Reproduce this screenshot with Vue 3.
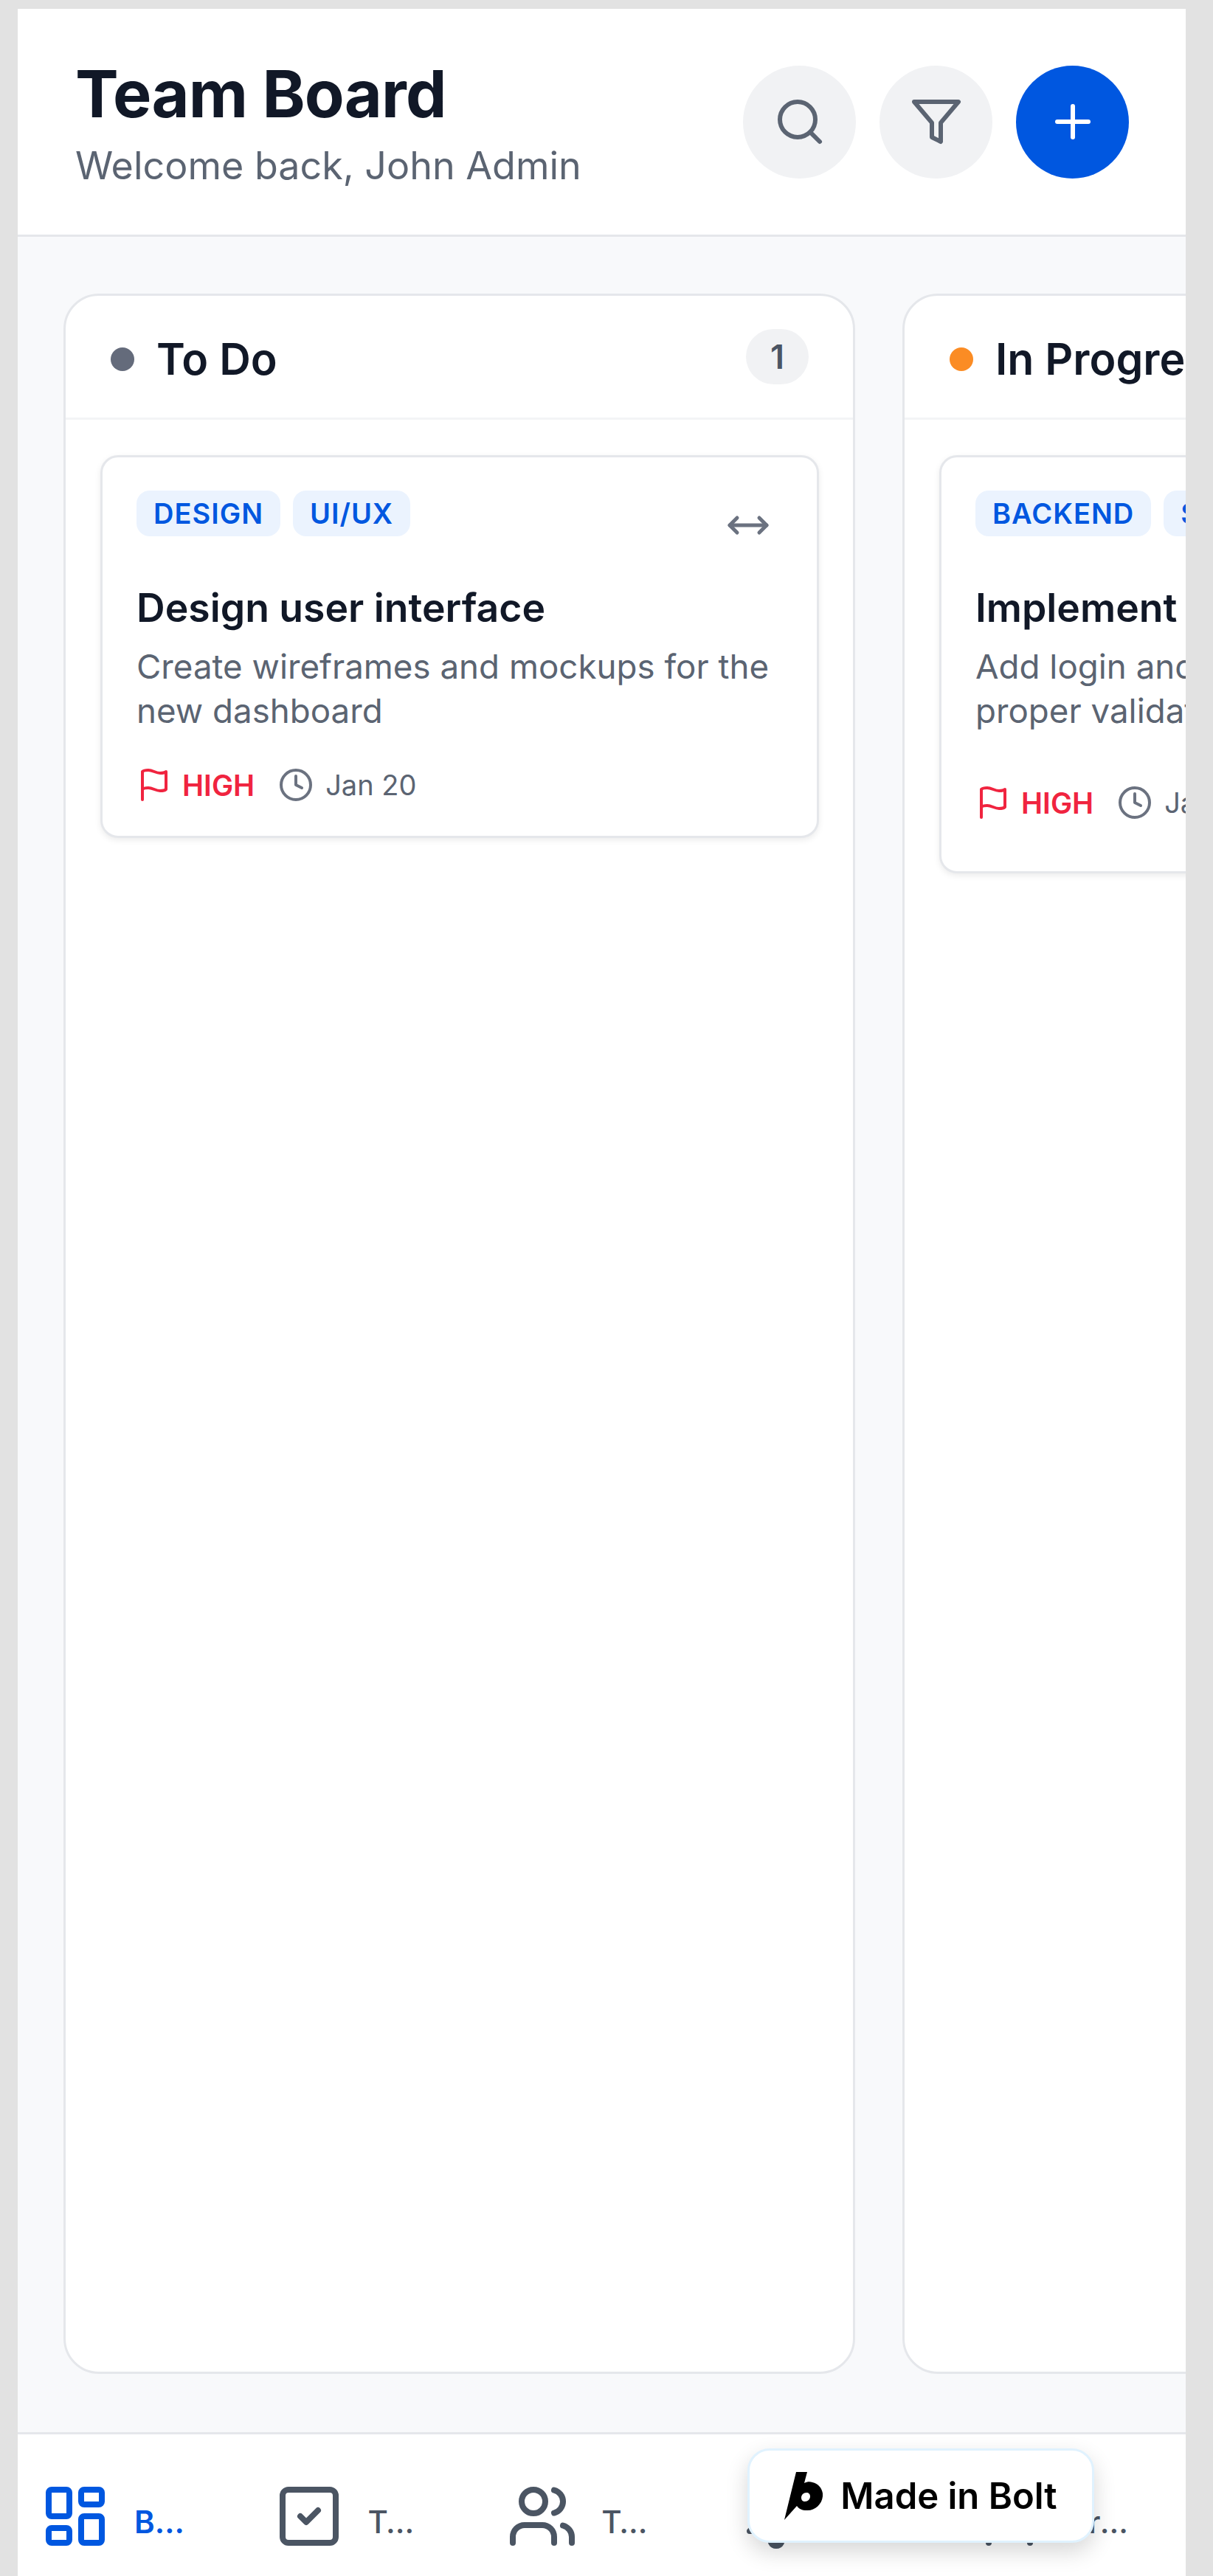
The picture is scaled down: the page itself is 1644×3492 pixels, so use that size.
<template>
  <div class="page">
    <div class="frame">

      <!-- HEADER -->
      <header class="topbar">
        <div class="heading">
          <h1>Team Board</h1>
          <p>Welcome back, John Admin</p>
        </div>
        <div class="top-actions">
          <button class="round">
            <svg viewBox="0 0 24 24" class="ico-lg"><circle cx="11" cy="11" r="8" /><path d="m21 21-4.3-4.3" /></svg>
          </button>
          <button class="round">
            <svg viewBox="0 0 24 24" class="ico-lg"><polygon points="22 3 2 3 10 12.46 10 19 14 21 14 12.46 22 3" /></svg>
          </button>
          <button class="round primary">
            <svg viewBox="0 0 24 24" class="ico-lg"><path d="M5 12h14" /><path d="M12 5v14" /></svg>
          </button>
        </div>
      </header>

      <!-- BOARD -->
      <main class="board">
        <section class="column" v-for="col in columns" :key="col.name">
          <div class="column-head">
            <span class="dot" :class="col.tone"></span>
            <h2>{{ col.name }}</h2>
            <span class="count">{{ col.tasks.length }}</span>
          </div>
          <div class="column-body">
            <article class="card" v-for="task in col.tasks" :key="task.title">
              <div class="card-top">
                <div class="tags">
                  <span class="tag" v-for="tag in task.tags" :key="tag">{{ tag }}</span>
                </div>
                <button class="move">
                  <svg viewBox="0 0 24 24"><path d="m18 8 4 4-4 4" /><path d="M2 12h20" /><path d="m6 8-4 4 4 4" /></svg>
                </button>
              </div>
              <h3>{{ task.title }}</h3>
              <p class="desc">{{ task.desc }}</p>
              <div class="meta">
                <svg viewBox="0 0 24 24" class="ico-sm flag"><path d="M4 15s1-1 4-1 5 2 8 2 4-1 4-1V3s-1 1-4 1-5-2-8-2-4 1-4 1z" /><path d="M4 22v-7" /></svg>
                <span class="priority">HIGH</span>
                <svg viewBox="0 0 24 24" class="ico-sm clock"><circle cx="12" cy="12" r="10" /><path d="M12 6v6l4 2" /></svg>
                <span class="date">{{ task.date }}</span>
                <span class="avatar" v-if="task.owner">{{ task.owner }}</span>
              </div>
            </article>
          </div>
        </section>
      </main>

      <!-- BOTTOM NAV -->
      <nav class="tabs">
        <a class="tab" v-for="tab in tabs" :key="tab.label" :class="{ active: tab.active }">
          <svg viewBox="0 0 24 24" class="tab-ico">
            <path v-for="d in tab.paths" :key="d" :d="d" />
          </svg>
          <span class="tab-label">{{ tab.label }}</span>
        </a>
      </nav>

      <!-- BOLT BADGE -->
      <div class="bolt">
        <svg viewBox="0 0 52 66" class="bolt-logo">
          <path fill-rule="evenodd" d="M16 1 31 1 27 16C31 14 35 14 38 15 47 17 53 25 52 34 51 45 41 54 30 53 24 53 20 51 17 47L0 66ZM30 29C26 29 23 32 23 36 23 39 25 41 28 41 32 41 35 38 35 34 35 31 33 29 30 29Z" />
        </svg>
        <span>Made in Bolt</span>
      </div>

    </div>
  </div>
</template>

<script setup>
import { ref } from 'vue'

const columns = ref([
  {
    name: 'To Do',
    tone: 'slate',
    tasks: [
      {
        title: 'Design user interface',
        desc: 'Create wireframes and mockups for the new dashboard',
        tags: ['DESIGN', 'UI/UX'],
        date: 'Jan 20'
      }
    ]
  },
  {
    name: 'In Progress',
    tone: 'orange',
    tasks: [
      {
        title: 'Implement authentication',
        desc: 'Add login and registration system with proper validation',
        tags: ['BACKEND', 'SECURITY'],
        date: 'Jan 18',
        owner: 'JA'
      }
    ]
  }
])

const tabs = [
  {
    label: 'Board',
    active: true,
    paths: [
      'M4 3h5a1 1 0 0 1 1 1v7a1 1 0 0 1-1 1H4a1 1 0 0 1-1-1V4a1 1 0 0 1 1-1z',
      'M15 3h5a1 1 0 0 1 1 1v3a1 1 0 0 1-1 1h-5a1 1 0 0 1-1-1V4a1 1 0 0 1 1-1z',
      'M15 12h5a1 1 0 0 1 1 1v7a1 1 0 0 1-1 1h-5a1 1 0 0 1-1-1v-7a1 1 0 0 1 1-1z',
      'M4 16h5a1 1 0 0 1 1 1v3a1 1 0 0 1-1 1H4a1 1 0 0 1-1-1v-3a1 1 0 0 1 1-1z'
    ]
  },
  {
    label: 'Tasks',
    paths: [
      'M5 3h14a2 2 0 0 1 2 2v14a2 2 0 0 1-2 2H5a2 2 0 0 1-2-2V5a2 2 0 0 1 2-2z',
      'm9 12 2 2 4-4'
    ]
  },
  {
    label: 'Team',
    paths: [
      'M16 21v-2a4 4 0 0 0-4-4H6a4 4 0 0 0-4 4v2',
      'M13 7a4 4 0 1 1-8 0 4 4 0 0 1 8 0z',
      'M22 21v-2a4 4 0 0 0-3-3.87',
      'M16 3.13a4 4 0 0 1 0 7.75'
    ]
  },
  {
    label: 'Notifications',
    paths: [
      'M6 8a6 6 0 0 1 12 0c0 7 3 9 3 9H3s3-2 3-9',
      'M10.3 21a1.94 1.94 0 0 0 3.4 0'
    ]
  },
  {
    label: 'Profile',
    paths: [
      'M19 21v-2a4 4 0 0 0-4-4H9a4 4 0 0 0-4 4v2',
      'M16 7a4 4 0 1 1-8 0 4 4 0 0 1 8 0z'
    ]
  }
]
</script>

<style>
html,
body {
  margin: 0;
  background: #e2e2e2;
}
</style>

<style scoped>
.page {
  height: 3492px;
  padding: 12px 37px 0 24px;
  box-sizing: border-box;
  background: #e2e2e2;
  font-family: Inter, "Liberation Sans", sans-serif;
  overflow: hidden;
}

.frame {
  position: relative;
  height: 100%;
  display: flex;
  flex-direction: column;
  background: white;
}

svg {
  fill: none;
  stroke: currentColor;
  stroke-width: 2;
  stroke-linecap: round;
  stroke-linejoin: round;
  display: block;
}

/* HEADER */
.topbar {
  height: 309px;
  box-sizing: border-box;
  border-bottom: 3px solid #e5e7eb;
  padding: 0 77px 0 78px;
  display: flex;
  justify-content: space-between;
  align-items: center;
  flex-shrink: 0;
}

.heading {
  margin-top: 0;
}

.topbar h1 {
  margin: 0 0 17px;
  font-size: 88px;
  line-height: 102px;
  font-weight: 700;
  color: #111827;
  letter-spacing: -0.8px;
}

.topbar p {
  margin: 0;
  font-size: 52px;
  line-height: 60px;
  color: #5b6472;
}

.top-actions {
  display: flex;
  gap: 32px;
}

.round {
  width: 153px;
  height: 153px;
  border: none;
  border-radius: 50%;
  background: #f1f2f4;
  color: #5b6472;
  display: flex;
  align-items: center;
  justify-content: center;
  padding: 0;
}

.round.primary {
  background: #0057e0;
  color: white;
}

.ico-lg {
  width: 72px;
  height: 72px;
}

/* BOARD */
.board {
  flex: 1;
  min-height: 0;
  display: flex;
  gap: 64px;
  padding: 77px 0 79px 62px;
  background: #f8f9fb;
  overflow: hidden;
}

.column {
  width: 1073px;
  flex-shrink: 0;
  box-sizing: border-box;
  background: white;
  border: 3px solid #e5e7eb;
  border-radius: 48px;
  display: flex;
  flex-direction: column;
}

.column-head {
  height: 168px;
  box-sizing: border-box;
  border-bottom: 3px solid #f3f4f6;
  padding: 6px 60px 0 61px;
  display: flex;
  align-items: center;
}

.dot {
  width: 32px;
  height: 32px;
  border-radius: 50%;
  margin-right: 30px;
  flex-shrink: 0;
}

.dot.slate {
  background: #646b7b;
}

.dot.orange {
  background: #fb8c24;
}

.column-head h2 {
  flex: 1;
  margin: 0;
  font-size: 59px;
  font-weight: 600;
  color: #111827;
  white-space: nowrap;
}

.count {
  min-width: 85px;
  height: 75px;
  margin-top: -6px;
  border-radius: 999px;
  background: #f1f2f4;
  color: #4b5563;
  font-size: 45px;
  font-weight: 600;
  display: flex;
  align-items: center;
  justify-content: center;
}

.column-body {
  padding: 48px 46px 48px 47px;
}

/* CARD */
.card {
  box-sizing: border-box;
  border: 3px solid #e5e7eb;
  border-radius: 24px;
  padding: 45px 46px;
  background: white;
  box-shadow: 0 3px 9px rgba(0, 0, 0, 0.08);
}

.card-top {
  display: flex;
  justify-content: space-between;
  align-items: flex-start;
  margin-bottom: 29px;
}

.tags {
  display: flex;
  gap: 17px;
}

.tag {
  height: 62px;
  padding: 0 23px;
  border-radius: 18px;
  background: #ebf3fe;
  color: #0057e0;
  font-size: 38px;
  font-weight: 600;
  letter-spacing: 1px;
  display: flex;
  align-items: center;
  white-space: nowrap;
}

.move {
  border: none;
  background: none;
  padding: 17px;
  color: #6b7280;
}

.move svg {
  width: 60px;
  height: 60px;
}

.card h3 {
  margin: 0;
  font-size: 53.5px;
  line-height: 72px;
  font-weight: 600;
  color: #111827;
  white-space: nowrap;
}

.desc {
  margin: 14px 0 0;
  font-size: 45.7px;
  line-height: 60px;
  color: #5b6472;
}

.meta {
  margin-top: 46px;
  min-height: 48px;
  display: flex;
  align-items: center;
}

.ico-sm {
  width: 48px;
  height: 48px;
  flex-shrink: 0;
}

.flag {
  color: #f0243f;
}

.priority {
  margin: 0 32px 0 14px;
  font-size: 39px;
  font-weight: 600;
  color: #f0243f;
}

.clock {
  color: #6b7280;
}

.date {
  margin-left: 16px;
  font-size: 38px;
  color: #5b6472;
  white-space: nowrap;
}

.avatar {
  width: 96px;
  height: 96px;
  margin-left: auto;
  border-radius: 50%;
  background: #0057e0;
  color: white;
  font-size: 36px;
  display: flex;
  align-items: center;
  justify-content: center;
}

/* BOTTOM NAV */
.tabs {
  height: 195px;
  box-sizing: border-box;
  border-top: 3px solid #e5e7eb;
  padding-top: 30px;
  display: grid;
  grid-template-columns: repeat(5, 1fr);
  flex-shrink: 0;
  background: white;
}

.tab {
  display: flex;
  align-items: center;
  gap: 32px;
  padding: 0 0 0 30px;
  min-width: 0;
  color: #4b5563;
}

.tab.active {
  color: #0057e0;
}

.tab-ico {
  width: 96px;
  height: 96px;
  flex-shrink: 0;
}

.tab-label {
  width: 78px;
  margin-top: 14px;
  font-size: 42px;
  font-weight: 500;
  white-space: nowrap;
  overflow: hidden;
  text-overflow: ellipsis;
}

.tab:last-child .tab-label {
  width: 88px;
}

.tab.active .tab-label {
  font-weight: 600;
}

/* BOLT BADGE */
.bolt {
  position: absolute;
  right: 124px;
  bottom: 45px;
  width: 470px;
  height: 128px;
  box-sizing: border-box;
  border: 3px solid #e0f2fe;
  border-radius: 30px;
  background: white;
  box-shadow: 0 12px 30px rgba(0, 0, 0, 0.16);
  display: flex;
  align-items: center;
  justify-content: center;
  gap: 24px;
  font-size: 49px;
  font-weight: 600;
  color: black;
}

.bolt-logo {
  width: 52px;
  height: 66px;
  fill: black;
  stroke: none;
}
</style>
